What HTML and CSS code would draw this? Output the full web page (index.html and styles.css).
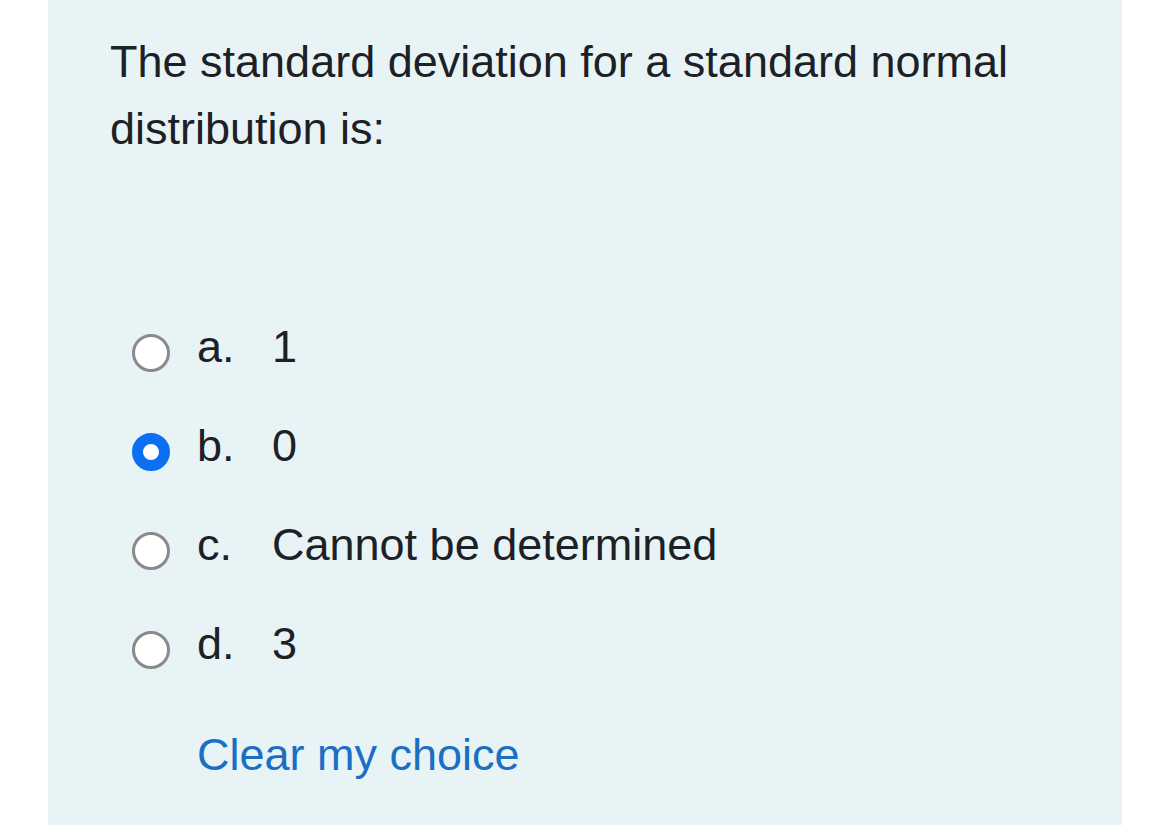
FILE: index.html
```html
<!DOCTYPE html>
<html lang="en">
<head>
<meta charset="utf-8">
<title>Question</title>
<link rel="stylesheet" href="styles.css">
</head>
<body>
<div class="formulation">
  <div class="qtext">The standard deviation for a standard normal distribution is:</div>
  <div class="answers">
    <div class="option"><span class="radio"></span><span class="num">a.</span><span class="text">1</span></div>
    <div class="option"><span class="radio checked"></span><span class="num">b.</span><span class="text">0</span></div>
    <div class="option"><span class="radio"></span><span class="num">c.</span><span class="text">Cannot be determined</span></div>
    <div class="option"><span class="radio"></span><span class="num">d.</span><span class="text">3</span></div>
  </div>
  <div class="clear"><a class="clear-link" href="#">Clear my choice</a></div>
</div>
</body>
</html>
```
FILE: styles.css
```css
html, body {
  margin: 0;
  padding: 0;
  background: #ffffff;
}
body {
  font-family: "Liberation Sans", Arial, sans-serif;
  color: #1d2125;
  font-size: 45px;
}
.formulation {
  margin-left: 48px;
  width: 1074px;
  min-height: 825px;
  box-sizing: border-box;
  background: #e7f3f5;
  padding: 28px 0 0 62px;
}
.qtext {
  line-height: 67px;
  width: 960px;
}
.answers {
  margin-top: 155px;
  display: flex;
  flex-direction: column;
  gap: 39px;
}
.option {
  display: flex;
  align-items: flex-start;
  height: 60px;
  line-height: 60px;
}
.radio {
  width: 38px;
  height: 38px;
  box-sizing: border-box;
  border-radius: 50%;
  border: 3px solid #8a8a8a;
  background: #ffffff;
  margin: 17px 27px 0 22px;
  flex: none;
}
.radio.checked {
  border: 11px solid #0b6ff2;
}
.num {
  width: 75px;
  flex: none;
}
.clear {
  margin-top: 51px;
  padding-left: 87px;
  line-height: 60px;
}
.clear-link {
  color: #1a6fc4;
  text-decoration: none;
}
```
